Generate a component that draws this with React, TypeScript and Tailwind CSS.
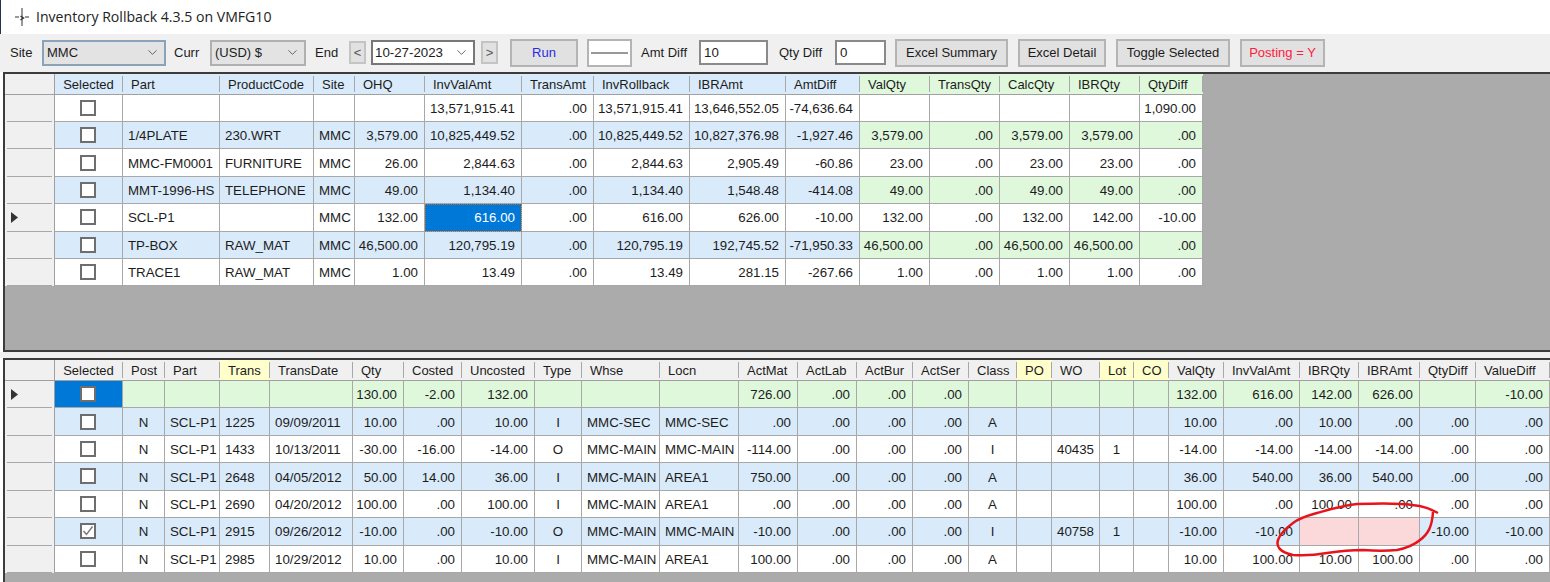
import React from 'react';
import { ChevronDown } from 'lucide-react';

type Align = 'l' | 'r' | 'c';

const topCols: { name: string; align: Align; tint: 'blue' | 'green' }[] = [
  { name: 'Part', align: 'l', tint: 'blue' },
  { name: 'ProductCode', align: 'l', tint: 'blue' },
  { name: 'Site', align: 'l', tint: 'blue' },
  { name: 'OHQ', align: 'r', tint: 'blue' },
  { name: 'InvValAmt', align: 'r', tint: 'blue' },
  { name: 'TransAmt', align: 'r', tint: 'blue' },
  { name: 'InvRollback', align: 'r', tint: 'blue' },
  { name: 'IBRAmt', align: 'r', tint: 'blue' },
  { name: 'AmtDiff', align: 'r', tint: 'blue' },
  { name: 'ValQty', align: 'r', tint: 'green' },
  { name: 'TransQty', align: 'r', tint: 'green' },
  { name: 'CalcQty', align: 'r', tint: 'green' },
  { name: 'IBRQty', align: 'r', tint: 'green' },
  { name: 'QtyDiff', align: 'r', tint: 'green' },
];

const topRows = [
  ['', '', '', '', '13,571,915.41', '.00', '13,571,915.41', '13,646,552.05', '-74,636.64', '', '', '', '', '1,090.00'],
  ['1/4PLATE', '230.WRT', 'MMC', '3,579.00', '10,825,449.52', '.00', '10,825,449.52', '10,827,376.98', '-1,927.46', '3,579.00', '.00', '3,579.00', '3,579.00', '.00'],
  ['MMC-FM0001', 'FURNITURE', 'MMC', '26.00', '2,844.63', '.00', '2,844.63', '2,905.49', '-60.86', '23.00', '.00', '23.00', '23.00', '.00'],
  ['MMT-1996-HS', 'TELEPHONE', 'MMC', '49.00', '1,134.40', '.00', '1,134.40', '1,548.48', '-414.08', '49.00', '.00', '49.00', '49.00', '.00'],
  ['SCL-P1', '', 'MMC', '132.00', '616.00', '.00', '616.00', '626.00', '-10.00', '132.00', '.00', '132.00', '142.00', '-10.00'],
  ['TP-BOX', 'RAW_MAT', 'MMC', '46,500.00', '120,795.19', '.00', '120,795.19', '192,745.52', '-71,950.33', '46,500.00', '.00', '46,500.00', '46,500.00', '.00'],
  ['TRACE1', 'RAW_MAT', 'MMC', '1.00', '13.49', '.00', '13.49', '281.15', '-267.66', '1.00', '.00', '1.00', '1.00', '.00'],
];

const bottomCols: { name: string; align: Align; yellow?: boolean }[] = [
  { name: 'Post', align: 'c' },
  { name: 'Part', align: 'l' },
  { name: 'Trans', align: 'l', yellow: true },
  { name: 'TransDate', align: 'l' },
  { name: 'Qty', align: 'r' },
  { name: 'Costed', align: 'r' },
  { name: 'Uncosted', align: 'r' },
  { name: 'Type', align: 'c' },
  { name: 'Whse', align: 'l' },
  { name: 'Locn', align: 'l' },
  { name: 'ActMat', align: 'r' },
  { name: 'ActLab', align: 'r' },
  { name: 'ActBur', align: 'r' },
  { name: 'ActSer', align: 'r' },
  { name: 'Class', align: 'c' },
  { name: 'PO', align: 'l', yellow: true },
  { name: 'WO', align: 'l' },
  { name: 'Lot', align: 'c', yellow: true },
  { name: 'CO', align: 'l', yellow: true },
  { name: 'ValQty', align: 'r' },
  { name: 'InvValAmt', align: 'r' },
  { name: 'IBRQty', align: 'r' },
  { name: 'IBRAmt', align: 'r' },
  { name: 'QtyDiff', align: 'r' },
  { name: 'ValueDiff', align: 'r' },
];

const bottomRows = [
  ['', '', '', '', '130.00', '-2.00', '132.00', '', '', '', '726.00', '.00', '.00', '.00', '', '', '', '', '', '132.00', '616.00', '142.00', '626.00', '', '-10.00'],
  ['N', 'SCL-P1', '1225', '09/09/2011', '10.00', '.00', '10.00', 'I', 'MMC-SEC', 'MMC-SEC', '.00', '.00', '.00', '.00', 'A', '', '', '', '', '10.00', '.00', '10.00', '.00', '.00', '.00'],
  ['N', 'SCL-P1', '1433', '10/13/2011', '-30.00', '-16.00', '-14.00', 'O', 'MMC-MAIN', 'MMC-MAIN', '-114.00', '.00', '.00', '.00', 'I', '', '40435', '1', '', '-14.00', '-14.00', '-14.00', '-14.00', '.00', '.00'],
  ['N', 'SCL-P1', '2648', '04/05/2012', '50.00', '14.00', '36.00', 'I', 'MMC-MAIN', 'AREA1', '750.00', '.00', '.00', '.00', 'A', '', '', '', '', '36.00', '540.00', '36.00', '540.00', '.00', '.00'],
  ['N', 'SCL-P1', '2690', '04/20/2012', '100.00', '.00', '100.00', 'I', 'MMC-MAIN', 'AREA1', '.00', '.00', '.00', '.00', 'A', '', '', '', '', '100.00', '.00', '100.00', '.00', '.00', '.00'],
  ['N', 'SCL-P1', '2915', '09/26/2012', '-10.00', '.00', '-10.00', 'O', 'MMC-MAIN', 'MMC-MAIN', '-10.00', '.00', '.00', '.00', 'I', '', '40758', '1', '', '-10.00', '-10.00', '', '', '-10.00', '-10.00'],
  ['N', 'SCL-P1', '2985', '10/29/2012', '10.00', '.00', '10.00', 'I', 'MMC-MAIN', 'AREA1', '100.00', '.00', '.00', '.00', 'A', '', '', '', '', '10.00', '100.00', '10.00', '100.00', '.00', '.00'],
];

const alignClass = { l: 'justify-start pl-[5px]', r: 'justify-end pr-[6px]', c: 'justify-center' };

const Check = ({ checked }: { checked?: boolean }) => (
  <div className="flex h-4 w-4 items-center justify-center border-2 border-[#6e6e6e] bg-white">
    {checked && (
      <svg width="12" height="12" viewBox="0 0 12 12" fill="none" stroke="#777777" strokeWidth="1.4">
        <path d="M1.5 6 L4.5 9.5 L10.5 1.5" />
      </svg>
    )}
  </div>
);

const RowHeader = ({ current }: { current?: boolean }) => (
  <div className="border-r border-[#a0a0a0] bg-[#f0f0f0] px-[2px]">
    <div className="flex h-full items-center border-b border-[#a8a8a8] pl-[4px]">
      {current && (
        <svg width="7" height="11" viewBox="0 0 7 11">
          <path d="M0 0 L7 5.5 L0 11 Z" fill="#333333" />
        </svg>
      )}
    </div>
  </div>
);

const HeadCell = ({ label, bg, center }: { label: string; bg: string; center?: boolean }) => (
  <div className={`border-b border-[#a0a0a0] py-[2px] text-[13px] ${bg}`}>
    <div className={`flex h-full items-center border-r border-[#a8a8a8] pt-[2px] ${center ? 'justify-center' : 'pl-[8px]'}`}>
      {label}
    </div>
  </div>
);

const Cell = ({ text, align, bg, extra }: { text: string; align: Align; bg: string; extra?: string }) => (
  <div className={`flex items-center overflow-hidden whitespace-nowrap border-r border-b border-[#a8a8a8] pt-[2px] ${alignClass[align]} ${bg} ${extra ?? ''}`}>
    {text}
  </div>
);

const TopGrid = () => (
  <div className="grid w-max grid-cols-[50px_68px_97px_94px_41px_70px_97px_72px_96px_96px_74px_70px_70px_70px_70px_63px] grid-rows-[20.5px_repeat(7,27.43px)]">
    <div className="border-r border-b border-[#a0a0a0] bg-[#f0f0f0]" />
    <HeadCell label="Selected" bg="bg-[#d9eafa]" center />
    {topCols.map((c) => (
      <HeadCell key={c.name} label={c.name} bg={c.tint === 'blue' ? 'bg-[#d9eafa]' : 'bg-[#dff8dc]'} />
    ))}
    {topRows.map((row, r) => (
      <React.Fragment key={r}>
        <RowHeader current={r === 4} />
        <div className={`flex items-center justify-center border-r border-b border-[#a8a8a8] pr-[1px] ${r % 2 ? 'bg-[#d9eafa]' : 'bg-white'}`}>
          <Check />
        </div>
        {row.map((text, i) => {
          const col = topCols[i];
          const tinted = r % 2 ? (col.tint === 'blue' ? 'bg-[#d9eafa]' : 'bg-[#dff8dc]') : 'bg-white';
          const active = r === 4 && i === 4;
          return (
            <Cell
              key={i}
              text={text}
              align={col.align}
              bg={active ? 'bg-[#0078d7]' : tinted}
              extra={active ? 'text-white outline-1 -outline-offset-1 outline-dotted outline-[#c46a1a]' : ''}
            />
          );
        })}
      </React.Fragment>
    ))}
  </div>
);

const BottomGrid = () => (
  <div className="grid w-max grid-cols-[50px_68px_42px_55px_50px_83px_51px_58px_73px_47px_78px_79px_59px_59px_56px_56px_48px_35px_48px_34px_35px_55px_76px_59px_61px_56px_74px] grid-rows-[21px_repeat(7,27.43px)]">
    <div className="border-r border-b border-[#a0a0a0] bg-[#f0f0f0]" />
    <HeadCell label="Selected" bg="bg-[#f0f0f0]" center />
    {bottomCols.map((c) => (
      <HeadCell key={c.name} label={c.name} bg={c.yellow ? 'bg-[#ffffcc]' : 'bg-[#f0f0f0]'} />
    ))}
    {bottomRows.map((row, r) => {
      const rowBg = r === 0 ? 'bg-[#dff8dc]' : r % 2 ? 'bg-[#d9eafa]' : 'bg-white';
      return (
        <React.Fragment key={r}>
          <RowHeader current={r === 0} />
          <div className={`flex items-center justify-center border-r border-b border-[#a8a8a8] pr-[1px] ${r === 0 ? 'bg-[#0078d7]' : rowBg}`}>
            <Check checked={r === 5} />
          </div>
          {row.map((text, i) => {
            const missing = r === 5 && (i === 21 || i === 22);
            return <Cell key={i} text={text} align={bottomCols[i].align} bg={missing ? 'bg-[#fbd9da]' : rowBg} />;
          })}
        </React.Fragment>
      );
    })}
  </div>
);

const Select = ({ value, w, border }: { value: string; w: string; border: string }) => (
  <div className={`flex h-[26px] items-center justify-between border-2 bg-[#e3e3e3] pl-[3px] pr-[4px] ${w} ${border}`}>
    <span>{value}</span>
    <ChevronDown size={15} strokeWidth={1.4} className="text-[#555555]" />
  </div>
);

const Btn = ({ label, w, ml, color }: { label: string; w: string; ml: string; color?: string }) => (
  <div className={`flex h-[28px] items-center justify-center border-2 border-[#b4b4b4] bg-[#e1e1e1] ${w} ${ml} ${color ?? ''}`}>
    {label}
  </div>
);

const Arrow = ({ label, ml }: { label: string; ml: string }) => (
  <div className={`flex h-[23px] w-[17px] items-center justify-center border-2 border-[#c4c4c4] bg-[#e1e1e1] text-[#555555] ${ml}`}>
    {label}
  </div>
);

const Input = ({ value, w }: { value: string; w: string }) => (
  <div className={`flex h-[25px] items-center border-2 border-[#8a8a8a] bg-white pl-[3px] text-[13.3px] ${w}`}>{value}</div>
);

export default function App() {
  return (
    <div className="relative flex h-[582px] w-[1550px] flex-col overflow-hidden bg-white font-['Liberation_Sans',Arial,sans-serif] text-[13.3px] text-[#1c1c1c]">
      {/* title bar */}
      <div className="flex h-[34px] shrink-0 items-center border-l border-[#24344a] pl-[14px]">
        <svg width="14" height="18" viewBox="0 0 14 18" fill="none" stroke="#333333">
          <path d="M0 9 H4 M10 9 H14" strokeWidth="1" />
          <path d="M7 0 V18" strokeWidth="1" />
          <path d="M5.5 8 L8.5 10 L5.5 12" strokeWidth="1.4" />
        </svg>
        <span className="ml-[7px] font-['Open_Sans',sans-serif] text-[14.1px] text-[#222222]">Inventory Rollback 4.3.5 on VMFG10</span>
      </div>

      {/* toolbar */}
      <div className="flex h-[38px] shrink-0 items-center bg-[#f0f0f0] pb-[1px] pl-[10px] text-[13px]">
        <span className="w-[32px]">Site</span>
        <Select value="MMC" w="w-[124px]" border="border-[#8aa3b8]" />
        <span className="ml-[8px] w-[36px]">Curr</span>
        <Select value="(USD) $" w="w-[96px]" border="border-[#b0b0b0]" />
        <span className="ml-[9px] w-[22px]">End</span>
        <Arrow label="<" ml="ml-[12px]" />
        <div className="ml-[5px] flex h-[25px] w-[104px] items-center justify-between border-2 border-[#777777] bg-white pl-[2px] pr-[4px] text-[13.3px]">
          <span>10-27-2023</span>
          <ChevronDown size={15} strokeWidth={1.4} className="text-[#555555]" />
        </div>
        <Arrow label=">" ml="ml-[6px]" />
        <Btn label="Run" w="w-[68px]" ml="ml-[12px]" color="text-[#2b2be0]" />
        <div className="ml-[9px] flex h-[28px] w-[45px] items-center border-2 border-[#b4b4b4] bg-white px-[2px]">
          <div className="h-[2px] w-full bg-[#999999]" />
        </div>
        <span className="ml-[9px] w-[58px]">Amt Diff</span>
        <Input value="10" w="w-[69px]" />
        <span className="ml-[11px] w-[56px]">Qty Diff</span>
        <Input value="0" w="w-[51px]" />
        <Btn label="Excel Summary" w="w-[113px]" ml="ml-[9px]" />
        <Btn label="Excel Detail" w="w-[88px]" ml="ml-[10px]" />
        <Btn label="Toggle Selected" w="w-[114px]" ml="ml-[10px]" />
        <Btn label="Posting = Y" w="w-[85px]" ml="ml-[10px]" color="text-[#ff2040]" />
      </div>

      {/* top grid */}
      <div className="ml-[3px] h-[280px] shrink-0 border-y-2 border-l-2 border-[#3c3c3c] bg-[#ababab]">
        <TopGrid />
      </div>

      <div className="h-[6px] shrink-0 bg-[#f0f0f0]" />

      {/* bottom grid */}
      <div className="ml-[3px] min-h-0 flex-1 overflow-hidden border-t-2 border-l-2 border-[#3c3c3c] bg-[#ababab]">
        <BottomGrid />
      </div>

      {/* red pen mark from the person who took the screenshot */}
      <svg className="pointer-events-none absolute left-0 top-0" width="1550" height="582" fill="none">
        <path
          d="M1438 513 C1430 509 1424 506 1412 505 C1400 503 1385 503 1357 504 C1340 506 1328 510 1317 513 C1306 516 1298 519 1293 523 C1285 529 1280 534 1278 540 C1276 546 1279 552 1293 555 C1305 556 1316 555 1327 553 C1340 551 1352 550 1363 550 C1375 551 1388 551 1397 550 C1407 548 1414 545 1420 540 C1428 534 1432 527 1433 512"
          stroke="#e8141c"
          strokeWidth="2.5"
        />
      </svg>
    </div>
  );
}
